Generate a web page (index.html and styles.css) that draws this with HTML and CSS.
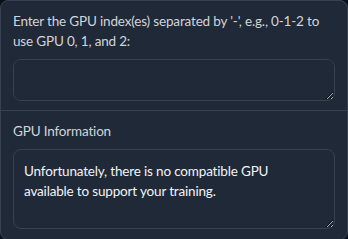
FILE: index.html
```html
<!DOCTYPE html>
<html lang="en">
<head>
    <meta charset="UTF-8">
    <title>GPU</title>
    <link rel="stylesheet" href="styles.css">
</head>
<body>
    <div class="panel">
        <div class="block">
            <label class="label" for="gpu-index">Enter the GPU index(es) separated by '-', e.g., 0-1-2 to use GPU 0, 1, and 2:</label>
            <textarea id="gpu-index" class="field field-small"></textarea>
        </div>
        <div class="block">
            <label class="label" for="gpu-info">GPU Information</label>
            <textarea id="gpu-info" class="field field-big">Unfortunately, there is no compatible GPU available to support your training.</textarea>
        </div>
    </div>
</body>
</html>
```

FILE: styles.css
```css
body {
    margin: 0;
    background: #0b0f19;
    font-family: Lato, "Open Sans", sans-serif;
}

.panel {
    box-sizing: border-box;
    width: 348px;
    height: 240px;
    border: 1px solid #374151;
    border-radius: 8px;
    background: #374151;
    display: flex;
    flex-direction: column;
    gap: 1px;
    overflow: hidden;
}

.block {
    background: #1f2937;
    padding: 10px 12px 9px 12px;
    display: flex;
    flex-direction: column;
}

.block:last-child {
    flex: 1;
}

.label {
    color: #d1d5db;
    font-size: 13.5px;
    line-height: 20px;
    letter-spacing: -0.17px;
    margin-bottom: 8px;
}

.field {
    box-sizing: border-box;
    background: #1f2937;
    border: 1px solid #374151;
    border-radius: 8px;
    color: #f3f4f6;
    font-family: inherit;
    font-size: 13.5px;
    line-height: 20px;
    letter-spacing: -0.17px;
    padding: 11px 40px 11px 10px;
    margin: 0;
    outline: none;
    resize: vertical;
}

.field-small {
    height: 42px;
}

.field-big {
    height: 80px;
}
```
